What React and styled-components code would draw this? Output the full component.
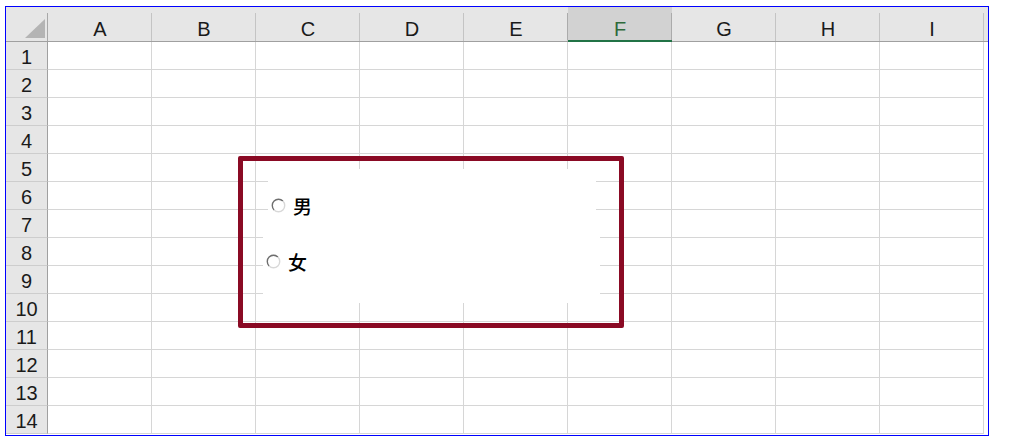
import React from "react";
import styled, { createGlobalStyle } from "styled-components";

const GlobalStyle = createGlobalStyle`
  * { box-sizing: border-box; }
  body {
    margin: 0;
    background: #ffffff;
    font-family: "Liberation Sans", Arial, sans-serif;
  }
`;

const Frame = styled.div`
  position: relative;
  margin: 6px 0 0 5px;
  width: 984px;
  height: 430px;
  border: 1px solid #0000ff;
  background: linear-gradient(#e6e6e6 0 34px, #a0a0a0 34px 35px, #ffffff 35px);
`;

const Sheet = styled.div`
  display: grid;
  grid-template-columns: 42px repeat(9, 104px);
  grid-template-rows: 35px repeat(14, 28px);
`;

const Corner = styled.div`
  position: relative;
  background: #e6e6e6;
  border-bottom: 1px solid #a0a0a0;
  display: flex;
  align-items: flex-end;
  justify-content: flex-end;
  padding: 0 3px 3px 0;
  &::after {
    content: "";
    position: absolute;
    right: 0;
    top: 6px;
    bottom: 0;
    width: 1px;
    background: #a8a8a8;
  }
`;

const ColHead = styled.div`
  position: relative;
  background: ${(p) => (p.$selected ? "#d2d2d2" : "#e6e6e6")};
  border-bottom: ${(p) => (p.$selected ? "2px solid #217346" : "1px solid #a0a0a0")};
  display: flex;
  justify-content: center;
  align-items: flex-start;
  padding-top: 12px;
  font-size: 20px;
  line-height: 20px;
  color: ${(p) => (p.$selected ? "#2f6a3a" : "#1a1a1a")};
  &::after {
    content: "";
    position: absolute;
    right: 0;
    top: 6px;
    bottom: 0;
    width: 1px;
    background: ${(p) => (p.$selected ? "#ababab" : "#c4c4c4")};
  }
  &::before {
    content: "";
    position: absolute;
    left: -1px;
    top: 6px;
    bottom: 0;
    width: 1px;
    background: ${(p) => (p.$selected ? "#ababab" : "transparent")};
  }
`;

const RowHead = styled.div`
  background: #e6e6e6;
  border-right: 1px solid #a0a0a0;
  border-bottom: 1px solid #cdcdcd;
  display: flex;
  justify-content: center;
  align-items: flex-start;
  padding-top: 5px;
  font-size: 20px;
  line-height: 20px;
  color: #1a1a1a;
`;

const Cell = styled.div`
  border-right: 1px solid #d6d6d6;
  border-bottom: 1px solid #d6d6d6;
  background: #ffffff;
`;

const ControlBox = styled.div`
  position: absolute;
  left: 232px;
  top: 149px;
  width: 386px;
  height: 172px;
  border: 5px solid #8a0a24;
  border-radius: 2px;
  display: flex;
  flex-direction: column;
  padding-top: 8px;
`;

const OptionArea = styled.div`
  margin-left: ${(p) => p.$left}px;
  width: ${(p) => p.$width}px;
  height: 67px;
  background: #ffffff;
  padding: ${(p) => p.$top}px 0 0 3px;
`;

const Choice = styled.label`
  display: flex;
  align-items: center;
  gap: 7px;
  font-family: "Noto Sans CJK SC", "Noto Sans CJK JP", sans-serif;
  font-size: 19px;
  font-weight: 500;
  line-height: 19px;
  color: #000000;
`;

const RadioIcon = () => (
  <svg width="15" height="15" viewBox="0 0 15 15">
    <circle cx="7.5" cy="7.5" r="6.2" fill="#ffffff" />
    <path d="M3.1 11.9 A6.2 6.2 0 0 1 11.9 3.1" fill="none" stroke="#6e6e6e" strokeWidth="1.4" />
    <path d="M11.9 3.1 A6.2 6.2 0 0 1 3.1 11.9" fill="none" stroke="#d8d8d8" strokeWidth="1.4" />
  </svg>
);

const CornerMark = () => (
  <svg width="20" height="19" viewBox="0 0 20 19">
    <polygon points="0,19 20,19 20,0" fill="#b4b4b4" />
  </svg>
);

const columns = ["A", "B", "C", "D", "E", "F", "G", "H", "I"];
const rows = Array.from({ length: 14 }, (_, i) => i + 1);

export default function App() {
  return (
    <>
      <GlobalStyle />
      <Frame>
        <Sheet>
          <Corner>
            <CornerMark />
          </Corner>
          {columns.map((c) => (
            <ColHead key={c} $selected={c === "F"}>
              {c}
            </ColHead>
          ))}
          {rows.map((r) => (
            <React.Fragment key={r}>
              <RowHead>{r}</RowHead>
              {columns.map((c) => (
                <Cell key={c} />
              ))}
            </React.Fragment>
          ))}
        </Sheet>
        <ControlBox>
          <OptionArea $left={25} $width={328} $top={27}>
            <Choice>
              <RadioIcon />
              男
            </Choice>
          </OptionArea>
          <OptionArea $left={20} $width={337} $top={16}>
            <Choice>
              <RadioIcon />
              女
            </Choice>
          </OptionArea>
        </ControlBox>
      </Frame>
    </>
  );
}
